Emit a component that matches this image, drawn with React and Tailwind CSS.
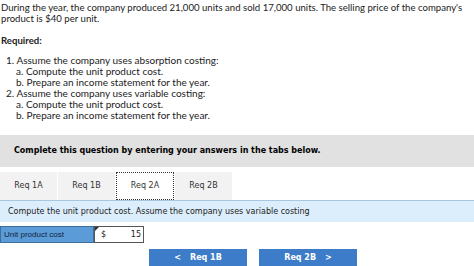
export default function App() {
  const tabs = ['Req 1A', 'Req 1B', 'Req 2A', 'Req 2B']
  const active = 'Req 2A'

  return (
    <div className="w-[474px] h-[266px] overflow-hidden bg-white text-[#222]">
      {/* Problem text */}
      <div className="pl-[1px] pt-[2px] text-[9.6px] leading-[11px]" style={{ fontFamily: 'Lato, sans-serif' }}>
        <p>During the year, the company produced 21,000 units and sold 17,000 units. The selling price of the company's product is $40 per unit.</p>
        <p className="mt-[11px] font-bold">Required:</p>
        <div className="mt-[9px] pl-[5px] text-[10px]">
          <p>1. Assume the company uses absorption costing:</p>
          <p className="pl-[10px]">a. Compute the unit product cost.</p>
          <p className="pl-[10px]">b. Prepare an income statement for the year.</p>
          <p>2. Assume the company uses variable costing:</p>
          <p className="pl-[10px]">a. Compute the unit product cost.</p>
          <p className="pl-[10px]">b. Prepare an income statement for the year.</p>
        </div>
      </div>

      <div style={{ fontFamily: '"DejaVu Sans", Verdana, sans-serif' }}>
        {/* Instruction box */}
        <div className="mt-[14px] h-[32px] bg-[#e1e1e1] flex items-center pl-[14px] text-[8px] font-bold text-black">
          Complete this question by entering your answers in the tabs below.
        </div>

        {/* Tabs */}
        <div className="mt-[5px] flex h-[28px] gap-[1px]">
          {tabs.map(t => (
            <div
              key={t}
              className={
                t === active
                  ? 'w-[58px] flex items-center justify-center bg-white border border-dotted border-[#333] text-[8px] text-[#333]'
                  : 'w-[57px] flex items-center justify-center bg-[#f2f2f2] text-[8px] text-[#333]'
              }
            >
              {t}
            </div>
          ))}
        </div>

        {/* Instruction bar */}
        <div className="h-[22px] bg-[#dceefb] border-t border-[#a9c6e0] flex items-center pl-[8px] text-[8px] text-[#222]">
          Compute the unit product cost. Assume the company uses variable costing
        </div>

        {/* Answer row */}
        <div className="mt-[4px] flex h-[17px]">
          <div className="w-[94px] bg-[#5b9bd8] border border-[#3d6f9e] flex items-center pl-[3px] text-[8px] text-[#14233a]" style={{ fontFamily: 'Arial, "Liberation Sans", sans-serif' }}>
            Unit product cost
          </div>
          <div className="relative w-[50px] bg-white border border-[#555] flex items-center justify-between pl-[6px] pr-[2px] text-[8px] text-[#222]">
            <span className="absolute left-0 top-0 w-0 h-0 border-t-[4px] border-r-[4px] border-t-[#333] border-r-transparent" />
            <span>$</span>
            <span>15</span>
          </div>
        </div>

        {/* Nav buttons */}
        <div className="mt-[6px] flex gap-[12px] pl-[149px]">
          <div className="w-[98px] h-[18px] bg-[#3d7cc9] flex items-center justify-center gap-[9px] text-white text-[8px] font-bold">
            <span>&lt;</span>
            <span>Req 1B</span>
          </div>
          <div className="w-[98px] h-[18px] bg-[#3d7cc9] flex items-center justify-center gap-[9px] text-white text-[8px] font-bold">
            <span>Req 2B</span>
            <span>&gt;</span>
          </div>
        </div>
      </div>
    </div>
  )
}
